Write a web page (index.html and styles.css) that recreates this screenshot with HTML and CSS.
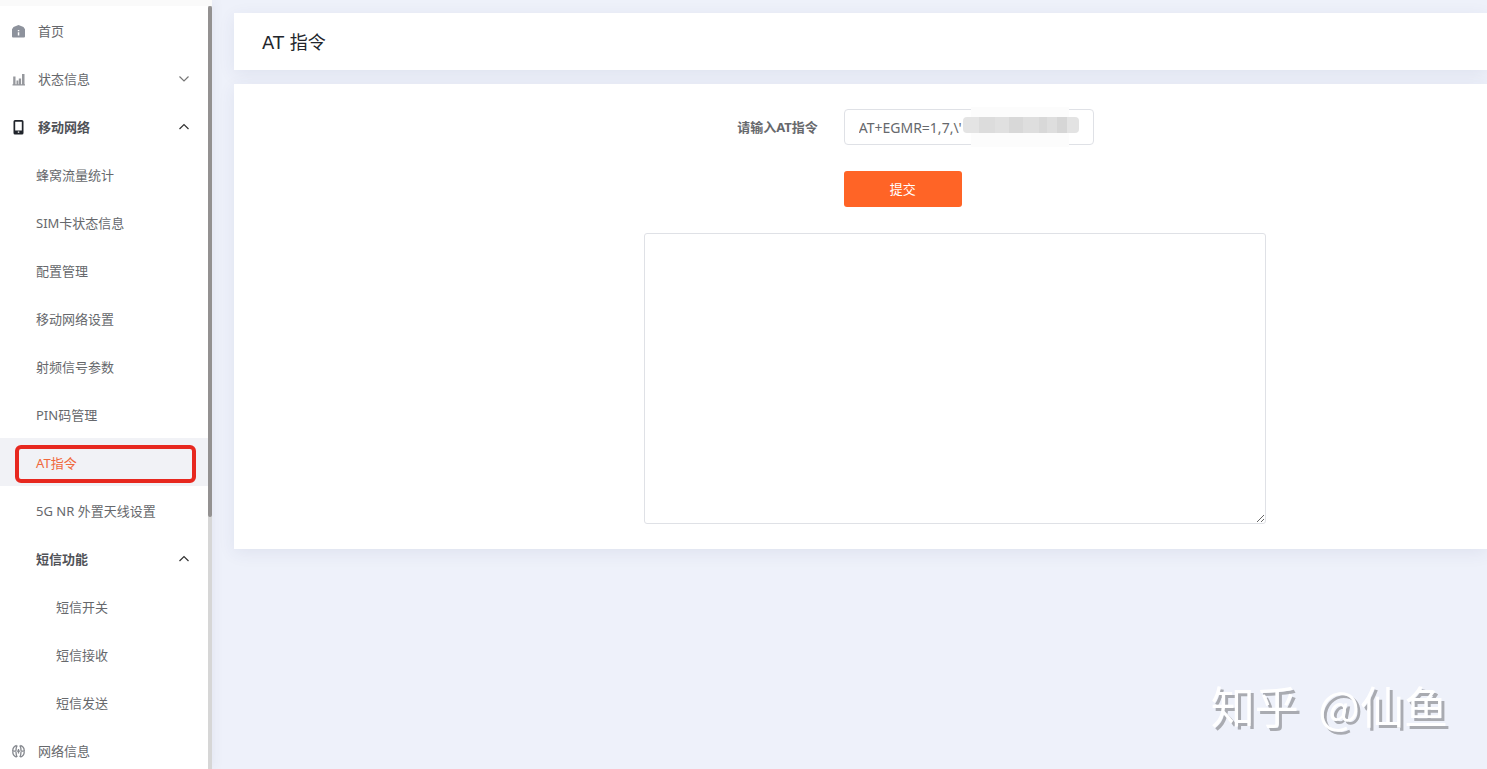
FILE: index.html
```html
<!DOCTYPE html>
<html lang="zh-CN">
<head>
<meta charset="utf-8">
<title>AT 指令</title>
<link rel="stylesheet" href="styles.css">
</head>
<body>
<div class="app">
  <aside class="sidebar">
    <nav class="menu" aria-label="主菜单">
      <a class="item" href="#"><svg class="icon" viewBox="0 0 14 14"><path fill="#8d929c" fill-rule="evenodd" d="M6.500 1 11.500 3l1.500 2.200v7.200a1 1 0 0 1-1 1H1a1 1 0 0 1-1-1V5.200L1.500 3zM5.800 6v1.200h1.500V6zM5.800 8.200V11.500h1.500V8.200z"/></svg><span>首页</span></a>
      <button class="item" type="button"><svg class="icon" viewBox="0 0 14 14"><path fill="#96989d" d="M.5 12.200h12.500v1.300H.5zM1.200 4.500h2.300v8H1.200zM4.500 8.500h1.800v4H4.500zM6.800 6.500h2.300v6H6.800zM10 2h2.500v10.500H10z"/></svg><span>状态信息</span><svg class="arrow" viewBox="0 0 12 12"><path d="M1.500 3.500 6 8l4.500-4.500"/></svg></button>
      <button class="item strong" type="button" aria-expanded="true"><svg class="icon" viewBox="0 0 14 14"><path fill="#20242b" fill-rule="evenodd" d="M3 0h7A1.500 1.500 0 0 1 11.500 1.500v11.500a1.500 1.500 0 0 1-1.500 1.500h-7A1.500 1.500 0 0 1 1.500 13V1.500A1.500 1.500 0 0 1 3 0zM3.200 1.800v8.600h6.600V1.800zM5.800 11.500v1.300h1.500v-1.300z"/></svg><span>移动网络</span><svg class="arrow" viewBox="0 0 12 12"><path d="M1.500 8 6 3.500 10.500 8"/></svg></button>
      <a class="item sub" href="#">蜂窝流量统计</a>
      <a class="item sub" href="#">SIM卡状态信息</a>
      <a class="item sub" href="#">配置管理</a>
      <a class="item sub" href="#">移动网络设置</a>
      <a class="item sub" href="#">射频信号参数</a>
      <a class="item sub" href="#">PIN码管理</a>
      <a class="item sub active" href="#" aria-current="page">AT指令</a>
      <a class="item sub" href="#">5G NR 外置天线设置</a>
      <button class="item sub strong" type="button" aria-expanded="true"><span>短信功能</span><svg class="arrow" viewBox="0 0 12 12"><path d="M1.500 8 6 3.500 10.500 8"/></svg></button>
      <a class="item leaf" href="#">短信开关</a>
      <a class="item leaf" href="#">短信接收</a>
      <a class="item leaf" href="#">短信发送</a>
      <a class="item" href="#"><svg class="icon" viewBox="0 0 14 14" fill="none" stroke="#85888e" stroke-width="1.300"><path d="M4.500 1.300C2 2.200.8 4.300.8 6.400M4.500 13.200C2 12.300.8 10.200.8 8.100M8.500 1.300c2.500.9 3.700 3 3.700 5.100M8.500 13.200c2.500-.9 3.700-3 3.700-5.100M5.200 1.500C4.300 3 4 4.500 4 6.400M5.200 13C4.300 11.500 4 10 4 8.100M7.800 1.500C8.700 3 9 4.500 9 6.400M7.800 13C8.700 11.500 9 10 9 8.100M0 7.200h4.500M8.500 7.200H13M6.500 5v4.500M5 7.200h3"/></svg><span>网络信息</span></a>
    </nav>
    <div class="track"><div class="thumb"></div></div>
  </aside>
  <main class="content">
    <header class="card heading"><h1>AT 指令</h1></header>
    <section class="card panel">
      <form class="form">
        <label for="cmd">请输入AT指令</label>
        <div class="field">
          <input id="cmd" type="text" value="AT+EGMR=1,7,\'">
          <div class="haze"><div class="mosaic"></div></div>
        </div>
        <button class="submit" type="button">提交</button>
        <textarea class="result" aria-label="返回结果"></textarea>
      </form>
    </section>
  </main>
</div>
<div class="watermark">知乎  @仙鱼</div>
</body>
</html>
```
FILE: styles.css
```css
* { box-sizing: border-box; }
body {
  margin: 0;
  background: #eef1fa;
  color: #66686c;
  font: 13px/20px "Noto Sans", "Noto Sans CJK SC", sans-serif;
}
button, input, textarea { font: inherit; color: inherit; }
.app { display: flex; height: 100vh; overflow: hidden; }
.sidebar {
  display: flex;
  flex: 0 0 212px;
  padding-top: 6px;
  background: linear-gradient(#fafafa 6px, #fff 6px);
  box-shadow: 0 0 12px rgba(60, 70, 120, .08);
}
.menu { flex: 1; overflow: hidden; }
.item {
  display: flex;
  align-items: center;
  width: 100%;
  height: 48px;
  padding: 1px 18px 0 12px;
  border: 0;
  background: none;
  color: #66686c;
  text-align: left;
  text-decoration: none;
}
.icon { width: 14px; height: 14px; margin-right: 12px; overflow: visible; }
.arrow {
  width: 12px;
  height: 12px;
  margin-left: auto;
  fill: none;
  stroke: #777;
  stroke-width: 1.2;
}
.strong { font-weight: 600; color: #505257; }
.strong .arrow { stroke: #333; }
.sub { padding-left: 36px; }
.leaf { padding-left: 56px; }
.active { position: relative; background: #f1f2f6; color: #f0683c; }
.active::after {
  content: "";
  position: absolute;
  inset: 7px 12px 3px 15px;
  border: 4px solid #e7281f;
  border-radius: 6px;
}
.track { width: 4px; background: #d6d6d6; }
.thumb { height: 67%; border-radius: 2px; background: #939191; }
.content { flex: 1; min-width: 0; padding: 13px 0 0 22px; }
.card { background: #fff; box-shadow: 0 4px 16px rgba(50, 60, 110, .08); }
.heading { padding: 17px 28px 15px; margin-bottom: 14px; }
h1 {
  margin: 0;
  color: #22252b;
  font: 18px/25px "DejaVu Sans", "Noto Sans CJK SC", sans-serif;
}
.panel { padding: 25px 0; }
.form {
  display: grid;
  grid-template-columns: 174px 1fr;
  gap: 26px;
  width: 49.7%;
  min-width: 450px;
  margin-left: 32.7%;
  align-items: center;
}
label { text-align: right; font-weight: 700; }
.field { position: relative; width: 250px; }
.field input {
  display: block;
  width: 100%;
  height: 36px;
  padding: 0 14px;
  border: 1px solid #dfe1e6;
  border-radius: 4px;
  background: #fff;
  font-size: 14px;
}
.haze {
  position: absolute;
  inset: -2px 15px -2px 119px;
  padding-top: 10px;
  background: linear-gradient(90deg, transparent 8px, #fcfcfc 8px calc(100% - 10px), transparent calc(100% - 10px));
}
.mosaic {
  height: 16px;
  border-radius: 4px;
  background: linear-gradient(90deg, #e4e4e4 16px, #dcdcdc 16px 32px, #e0e0e0 32px 46px, #d8d8d8 46px 60px, #dedede 60px 76px, #d8d8d8 76px 84px, #dedede 84px 94px, #d6d6d6 94px 104px, #e3e3e3 104px);
}
.submit {
  grid-column: 2;
  width: 118px;
  height: 36px;
  border: 0;
  border-radius: 3px;
  background: #ff6426;
  color: #fff;
}
.result {
  grid-column: 1 / -1;
  display: block;
  width: 100%;
  height: 291px;
  border: 1px solid #dfe1e6;
  border-radius: 3px;
  resize: both;
}
.watermark {
  position: fixed;
  right: 39px;
  bottom: 32px;
  color: #fff;
  font: 44px/64px "Noto Sans CJK SC", sans-serif;
  text-shadow: 3px 3px 0 #a9abb1;
  white-space: pre;
}
```
